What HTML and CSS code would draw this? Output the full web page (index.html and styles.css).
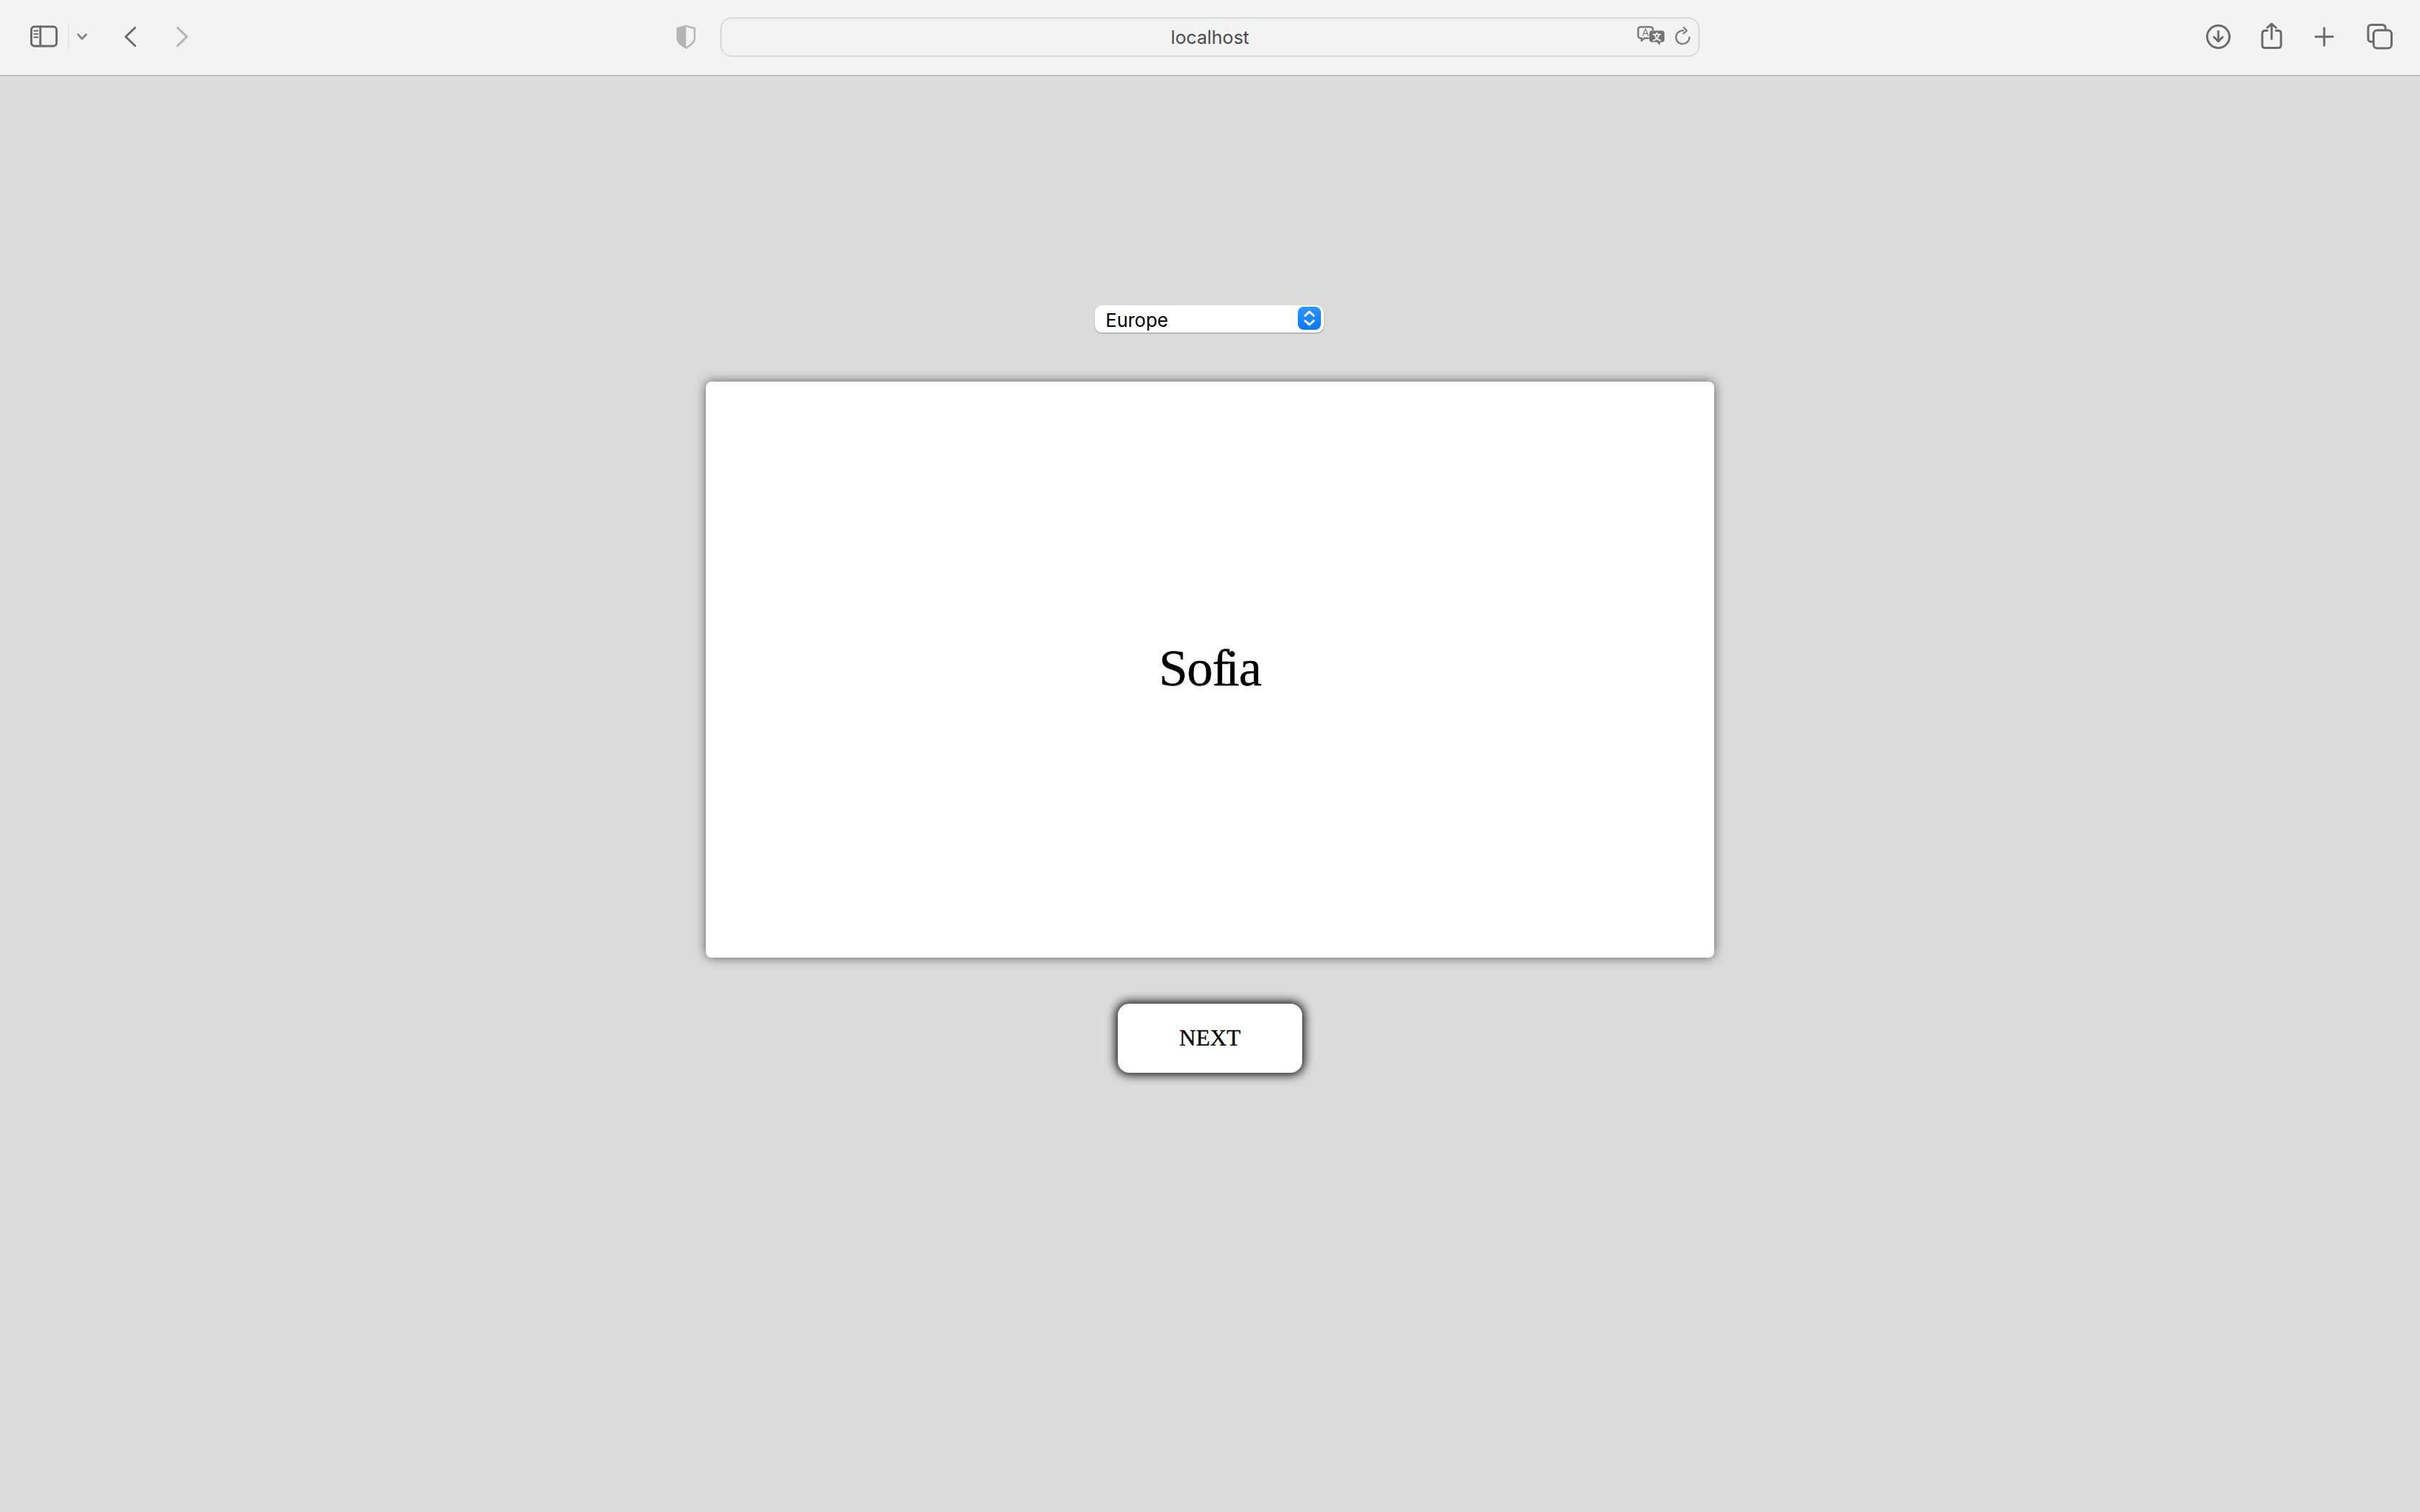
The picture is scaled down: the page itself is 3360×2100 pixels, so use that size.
FILE: index.html
```html
<!DOCTYPE html>
<html lang="en">
<head>
<meta charset="utf-8">
<title>Flashcards</title>
<link rel="stylesheet" href="styles.css">
</head>
<body>
<header class="toolbar">
  <div class="tool-left">
    <svg viewBox="0 0 84 40" width="84" height="40" aria-hidden="true">
      <rect x="3.5" y="6" width="35" height="27" rx="4.5" class="stroke-dark"/>
      <path d="M16 6v27" class="stroke-dark"/>
      <path d="M7.500 11.800h5M7.500 16.200h5M7.500 20.800h5" class="stroke-dark thin"/>
      <path d="M55 1.500v37" class="stroke-divider"/>
      <path d="M68.500 17l5.500 6 5.500-6" class="stroke-mid"/>
    </svg>
    <svg class="icon-back" viewBox="0 0 24 32" width="24" height="32" aria-hidden="true">
      <path d="M18.500 3.500L5.500 16l13 12.500" class="stroke-dark"/>
    </svg>
    <svg class="icon-forward" viewBox="0 0 24 32" width="24" height="32" aria-hidden="true">
      <path d="M5.500 3.500L18.500 16l-13 12.500" class="stroke-light"/>
    </svg>
    <svg class="icon-shield" viewBox="0 0 32 38" width="32" height="38" aria-hidden="true">
      <path d="M16.500 4l12 3.500v13.500c0 5.500-5.500 10-12 13.500C10 31 4.500 26.500 4.500 21V7.500z" class="stroke-shield"/>
      <path d="M16.500 4l-12 3.500v13.500c0 5.500 5.500 10 12 13.500z" class="fill-shield"/>
    </svg>
  </div>
  <div class="address">
    <span></span>
    <span class="address-text">localhost</span>
    <div class="address-tools">
      <svg viewBox="0 0 40 30" width="40" height="30" aria-hidden="true">
        <path d="M6 1.500h13.500c2.300 0 3.500 1.200 3.500 3.500v8.500c0 2.300-1.200 3.500-3.500 3.500H11l-4 3.500V17H6c-2.300 0-3.500-1.200-3.500-3.500V5c0-2.300 1.200-3.500 3.500-3.500z" class="stroke-bubble"/>
        <text x="12.700" y="13.500" class="glyph-a">A</text>
        <path d="M21.500 6.500h14c2.300 0 3.500 1.200 3.500 3.500v9c0 2.300-1.200 3.500-3.500 3.500H33v4.500l-4.500-4.500h-7c-2.300 0-3.500-1.200-3.500-3.500v-9c0-2.300 1.200-3.500 3.500-3.500z" class="fill-bubble"/>
        <text x="28.200" y="20" class="glyph-wen">文</text>
      </svg>
      <svg viewBox="0 0 24 28" width="24" height="28" aria-hidden="true">
        <path d="M13 5.500A9.300 9.300 0 1 0 21.600 14.800" class="stroke-reload"/>
        <path d="M13.500 1l4.500 4.500-4.500 4" class="stroke-reload"/>
      </svg>
    </div>
  </div>
  <div class="tool-right">
    <svg viewBox="0 0 36 36" width="36" height="36" aria-hidden="true">
      <circle cx="18" cy="18" r="15.500" class="stroke-dark"/>
      <path d="M18 10.500v14M12 18.500l6 6 6-6" class="stroke-dark"/>
    </svg>
    <svg viewBox="0 0 32 40" width="32" height="40" aria-hidden="true">
      <path d="M10 11.500H7c-2.500 0-4 1.500-4 4v16c0 2.500 1.500 4 4 4h18c2.500 0 4-1.500 4-4v-16c0-2.500-1.500-4-4-4h-3" class="stroke-dark"/>
      <path d="M16 23V2M10 7.500L16 2l6 5.500" class="stroke-dark"/>
    </svg>
    <svg viewBox="0 0 34 34" width="34" height="34" aria-hidden="true">
      <path d="M17 5v24M5 17h24" class="stroke-dark"/>
    </svg>
    <svg viewBox="0 0 40 40" width="40" height="40" aria-hidden="true">
      <path d="M9.500 27h-1C5.500 27 4 25.500 4 22.500V8c0-3 1.500-4.500 4.500-4.500h15c3 0 4.500 1.500 4.500 4.500v.5" class="stroke-dark"/>
      <rect x="11.500" y="11" width="25" height="25" rx="5" class="stroke-dark"/>
    </svg>
  </div>
</header>
<main class="page">
  <div class="picker">
    <select class="picker-select" aria-label="Region">
      <option>Europe</option>
    </select>
    <svg class="picker-arrows" viewBox="0 0 32 32" width="32" height="32" aria-hidden="true">
      <defs>
        <linearGradient id="pickerBlue" x1="0" y1="0" x2="0" y2="1">
          <stop offset="0" stop-color="#2c95ff"/>
          <stop offset="1" stop-color="#0779ff"/>
        </linearGradient>
      </defs>
      <rect width="32" height="32" rx="8" fill="url(#pickerBlue)"/>
      <path d="M10 12.500l6-5.500 6 5.500M10 19.500l6 5.500 6-5.500" class="stroke-white"/>
    </svg>
  </div>
  <section class="card"><span class="card-word">So<span class="card-f">f</span>ia</span></section>
  <button class="next" type="button">NEXT</button>
</main>
</body>
</html>
```
FILE: styles.css
```css
* { box-sizing: border-box; }
html, body { height: 100%; }
body {
  margin: 0;
  background: #dddcda;
  display: flex;
  flex-direction: column;
  overflow: hidden;
}
svg { display: block; flex: none; fill: none; }

.toolbar {
  height: 106px;
  flex: none;
  background: #f2f4f4;
  border-bottom: 2px solid #bfbfbf;
  display: grid;
  grid-template-columns: 1fr 1360px 1fr;
  align-items: center;
  padding-bottom: 2px;
}
.tool-left { display: flex; align-items: center; padding-left: 40px; }
.icon-back { margin-left: 45px; }
.icon-forward { margin-left: 48px; }
.icon-shield { margin-left: auto; margin-right: 32px; }
.tool-right {
  display: flex;
  align-items: center;
  justify-content: flex-end;
  gap: 40px;
  padding-right: 36px;
}

.address {
  height: 55px;
  border: 2px solid #d8dada;
  border-radius: 16px;
  display: grid;
  grid-template-columns: 1fr auto 1fr;
  align-items: center;
}
.address-text {
  font: 25.500px/1 Inter, "Liberation Sans", sans-serif;
  color: #4a4a4a;
  padding-top: 2px;
}
.address-tools {
  display: flex;
  align-items: center;
  justify-content: flex-end;
  gap: 12px;
  padding-right: 10px;
}

.stroke-dark, .stroke-mid, .stroke-light, .stroke-divider, .stroke-shield, .stroke-bubble, .stroke-reload, .stroke-white {
  fill: none;
  stroke-linecap: round;
  stroke-linejoin: round;
}
.stroke-dark { stroke: #6a6a6a; stroke-width: 3px; }
.stroke-dark.thin { stroke-width: 2px; }
.stroke-mid { stroke: #86888a; stroke-width: 3px; }
.stroke-light { stroke: #b2b3b3; stroke-width: 3px; }
.stroke-divider { stroke: #e6e8e8; stroke-width: 2px; }
.stroke-shield { stroke: #b3b5b5; stroke-width: 2.500px; }
.fill-shield { fill: #b3b5b5; }
.stroke-bubble { stroke: #7a7a7a; stroke-width: 2.500px; }
.fill-bubble {
  fill: #757575;
  stroke: #f2f4f4;
  stroke-width: 1px;
  paint-order: stroke;
}
.stroke-reload { stroke: #7b7b7b; stroke-width: 2.300px; }
.stroke-white { stroke: #fff; stroke-width: 3px; }
.glyph-a {
  font: 500 14px "Liberation Sans", sans-serif;
  fill: #7a7a7a;
  text-anchor: middle;
}
.glyph-wen {
  font: 700 12px "Noto Sans CJK SC", sans-serif;
  fill: #fff;
  text-anchor: middle;
}

.page {
  flex: 1;
  display: flex;
  flex-direction: column;
  align-items: center;
  padding-top: 318px;
}
.picker {
  position: relative;
  width: 318px;
  height: 38px;
  margin-right: 2px;
}
.picker-select {
  appearance: none;
  -webkit-appearance: none;
  display: block;
  width: 100%;
  height: 100%;
  margin: 0;
  padding: 2px 0 0 15px;
  border: 0;
  border-radius: 10px;
  background: #fff;
  box-shadow: 0 1px 2px rgba(0, 0, 0, 0.35);
  font: 26px Inter, "Liberation Sans", sans-serif;
  color: #000;
}
.picker-arrows { position: absolute; top: 2px; right: 4px; }

.card {
  width: 1400px;
  height: 800px;
  margin-top: 68px;
  background: #fff;
  border-radius: 8px;
  box-shadow: 0 0 16px rgba(0, 0, 0, 0.6);
  display: flex;
  align-items: center;
  justify-content: center;
  padding-bottom: 4px;
  font: 72px "Liberation Serif", serif;
  color: #000;
  -webkit-text-stroke: 0.4px #000;
}
.card-word { letter-spacing: -1px; }
.card-f { letter-spacing: -6px; }

.next {
  width: 256px;
  height: 96px;
  margin-top: 64px;
  padding: 0 0 2px;
  background: #fff;
  border: 0;
  border-radius: 16px;
  box-shadow: 0 0 14px 3px rgba(0, 0, 0, 0.95);
  font: 32px "Liberation Serif", serif;
  color: #000;
  -webkit-text-stroke: 0.3px #000;
}
```
